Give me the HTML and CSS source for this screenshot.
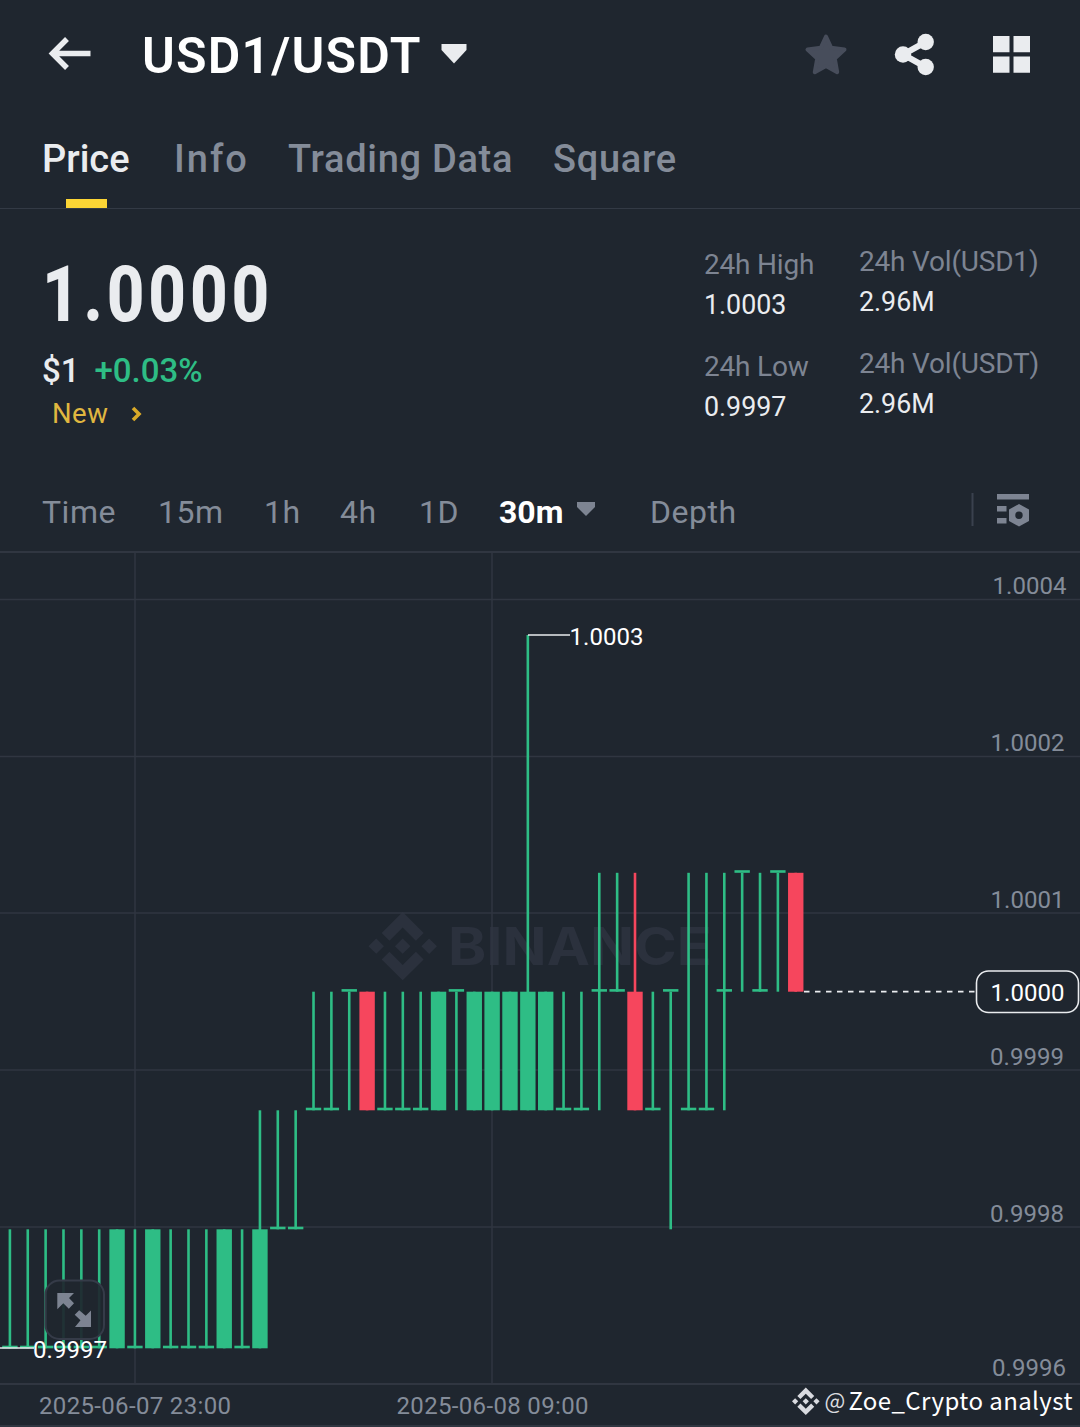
FILE: index.html
```html
<!DOCTYPE html>
<html lang="en">
<head>
  <meta charset="UTF-8">
  <title>USD1/USDT</title>
  <link rel="stylesheet" href="styles.css">
</head>
<body>

<header class="header">
  <svg class="header_back" width="44" height="36" viewBox="48 36 44 36">
    <path d="M67 39L52.500 53.500L67 68M52 53.500H90.500" fill="none" stroke="#eaecef" stroke-width="5.500"/>
  </svg>
  <h1 class="header_title">USD1/USDT</h1>
  <svg class="header_caret" width="26" height="20" viewBox="0 0 26 20">
    <path d="M.5 0h25v6L13 19.500.5 6z" fill="#eaecef"/>
  </svg>
  <div class="header_actions">
    <svg width="44" height="44" viewBox="804 31 44 44">
      <path d="M826 35.500l5.200 11.300 13.300 1.800-9.700 8.900 2.400 13.700L826 65l-11.200 6.200 2.400-13.700-9.700-8.900 13.300-1.800z" fill="#474d5b" stroke="#474d5b" stroke-width="4" stroke-linejoin="round"/>
    </svg>
    <svg width="44" height="44" viewBox="893 31 44 44">
      <path d="M925.700 41L903 53.500l22.700 12.500" fill="none" stroke="#eaecef" stroke-width="6"/>
      <g fill="#eaecef">
        <circle cx="903" cy="53.500" r="8.200"/>
        <circle cx="925.700" cy="41" r="8.200"/>
        <circle cx="925.700" cy="66" r="8.200"/>
      </g>
    </svg>
    <svg width="44" height="44" viewBox="989 31 44 44">
      <path d="M993 35h16.500v16.300H993zM1013.500 35h16.500v16.300h-16.500zM993 55.500h16.500v16.300H993zM1013.500 55.500h16.500v16.300h-16.500z" fill="#eaecef"/>
    </svg>
  </div>
</header>

<nav class="tabs">
  <a class="tabs_item is-active">Price</a>
  <a class="tabs_item tabs_item-info">Info</a>
  <a class="tabs_item tabs_item-data">Trading Data</a>
  <a class="tabs_item">Square</a>
</nav>

<section class="summary">
  <div class="summary_main">
    <div class="price">1.0000</div>
    <div class="change"><span class="change_fiat">$1</span><span class="change_rate">+0.03%</span></div>
    <div class="tag">New
      <svg width="12" height="16" viewBox="0 0 12 16"><path d="M2 2l6 6-6 6" fill="none" stroke="#d9a928" stroke-width="3.600"/></svg>
    </div>
  </div>
  <dl class="stats">
    <dt>24h High</dt><dd>1.0003</dd>
    <dt>24h Low</dt><dd>0.9997</dd>
  </dl>
  <dl class="stats stats-vol">
    <dt>24h Vol(USD1)</dt><dd>2.96M</dd>
    <dt>24h Vol(USDT)</dt><dd>2.96M</dd>
  </dl>
</section>

<nav class="intervals">
  <a>Time</a>
  <a>15m</a>
  <a>1h</a>
  <a>4h</a>
  <a>1D</a>
  <a class="is-active">30m <svg width="18" height="14" viewBox="0 0 18 14"><path d="M0 0h18v5L9 14 0 5z" fill="#7d8492"/></svg></a>
  <a>Depth</a>
  <svg class="intervals_settings" width="60" height="36" viewBox="971 492 60 36">
    <path d="M972.500 493v33" stroke="#3a414e" stroke-width="2"/>
    <path d="M997 494h32v5.500h-32zM997 506h9.500v5.500H997zM997 518h9.500v5.500H997z" fill="#7d8492"/>
    <path d="M1019 504l10 5.600v11.300l-10 5.600-10-5.600v-11.300zM1019 511.500a3.700 3.700 0 100 7.400 3.700 3.700 0 000-7.400z" fill="#7d8492" fill-rule="evenodd"/>
  </svg>
</nav>

<svg class="chart" width="1080" height="876" viewBox="0 551 1080 876">
  <defs>
    <path id="logo" d="M16.624 13.920l2.718 2.715-7.353 7.353-7.353-7.352 2.717-2.716 4.636 4.660 4.636-4.660zm4.637-4.637L24 12l-2.715 2.716L18.568 12l2.693-2.716zm-9.272.001l2.716 2.691-2.716 2.717L9.272 12l2.716-2.715zm-9.272-.001L5.409 12l-2.691 2.692L0 12l2.716-2.716zM11.989.012l7.353 7.329-2.718 2.715-4.636-4.636-4.635 4.660-2.717-2.715 7.353-7.353z"/>
  </defs>

  <g class="watermark">
    <use href="#logo" transform="translate(368.500 912) scale(2.850)"/>
    <text x="448" y="965" textLength="264" lengthAdjust="spacingAndGlyphs">BINANCE</text>
  </g>

  <path class="grid" d="M0 599.500H1080M0 756.500H1080M0 913H1080M0 1070H1080M0 1227H1080M135 552V1384M492 552V1384"/>
  <path class="grid grid-edge" d="M0 552H1080M0 1384H1080M0 1426H1080"/>

  <g id="candles"></g>

  <!-- high, low and last price markers -->
  <path class="marker" d="M528 635H570"/>
  <path class="last" d="M804 991.700H976"/>

  <g class="expand">
    <rect x="45.500" y="1280.500" width="58.500" height="58.500" rx="14"/>
    <path d="M57.300 1293H74l-5 5 5 5.300-5.200 5.400-5.500-5.400-6 6zM91 1327v-16.500l-5.300 5.200-6.500-5.400-4.500 4.500 5.800 5.500-5.500 6.700z"/>
  </g>
  <path class="marker" d="M0 1348H34"/>

  <g class="axis">
    <text x="992.500" y="594" textLength="74">1.0004</text>
    <text x="990.500" y="751" textLength="74">1.0002</text>
    <text x="990.500" y="908" textLength="74">1.0001</text>
    <text x="990" y="1065" textLength="74">0.9999</text>
    <text x="990" y="1222" textLength="74">0.9998</text>
    <text x="992" y="1376" textLength="74">0.9996</text>
    <text x="39" y="1414" textLength="192">2025-06-07 23:00</text>
    <text x="396.500" y="1414" textLength="192">2025-06-08 09:00</text>
  </g>

  <g class="axis axis-on">
    <rect x="976.500" y="971" width="102" height="41.500" rx="12"/>
    <text x="990.500" y="1001" textLength="74">1.0000</text>
    <text x="569.500" y="645" textLength="74">1.0003</text>
    <text x="33" y="1358" textLength="74">0.9997</text>
  </g>

  <g class="author">
    <use href="#logo" transform="translate(792 1387.500) scale(1.150)"/>
    <text x="824.500" y="1409" textLength="21">@</text>
    <text class="author_name" x="848.500" y="1410" textLength="224">Zoe_Crypto analyst</text>
  </g>
</svg>

<script src="chart.js"></script>
</body>
</html>
```
FILE: styles.css
```css
body {
  margin: 0;
  width: 1080px;
  height: 1427px;
  overflow: hidden;
  background-color: #1f262f;
  color: #eaecef;
  font-family: Roboto, "Liberation Sans", sans-serif;
}

.header {
  display: flex;
  align-items: center;
  height: 107px;
  padding: 0 47px 0 48px;
}
.header_title {
  margin: 5px 0 0 50px;
  width: 280px;
  color: #fff;
  font-size: 50px;
  font-weight: 600;
  letter-spacing: 1.2px;
  white-space: nowrap;
}
.header_caret {
  margin-left: 19px;
}
.header_actions {
  display: flex;
  margin-left: auto;
}
.header_actions svg {
  margin-left: 45px;
}
.header_actions svg:last-child {
  margin-left: 52px;
}

.tabs {
  display: grid;
  grid-template-columns: 132px 114px 265px 1fr;
  height: 101px;
  padding-left: 42px;
  border-bottom: 1px solid #333a45;
}
.tabs_item {
  position: relative;
  height: 101px;
  line-height: 104px;
  color: #848c99;
  font-size: 38px;
  font-weight: 500;
  letter-spacing: .7px;
  white-space: nowrap;
}
.tabs_item-info {
  letter-spacing: 2px;
}
.tabs .is-active {
  color: #eaecef;
  letter-spacing: 0;
}
.tabs .is-active::after {
  content: "";
  position: absolute;
  left: 24px;
  bottom: 0;
  width: 41px;
  height: 9px;
  background-color: #fcd535;
}

.summary {
  display: flex;
  height: 256px;
}
.summary_main {
  width: 662px;
  padding: 41px 0 0 42px;
}
.price {
  height: 90px;
  line-height: 90px;
  font-size: 77px;
  font-weight: 800;
  letter-spacing: 4.5px;
  transform: scaleX(.85);
  transform-origin: left;
}
.change {
  height: 61px;
  line-height: 61px;
  font-size: 33px;
  font-weight: 500;
}
.change_rate {
  margin-left: 15px;
  color: #2ebd85;
}
.tag {
  padding-left: 10px;
  line-height: 26px;
  color: #e0b740;
  font-size: 27.5px;
  letter-spacing: .5px;
}
.tag svg {
  margin-left: 15px;
  vertical-align: 1px;
}
.stats {
  width: 155px;
  margin: 36px 0 0;
  white-space: nowrap;
}
.stats-vol {
  width: 200px;
  margin-top: 33px;
}
.stats dt {
  height: 40px;
  line-height: 40px;
  color: #7d8492;
  font-size: 28px;
  letter-spacing: -.2px;
}
.stats dd {
  height: 40px;
  margin: 0 0 22px;
  line-height: 40px;
  font-size: 28.5px;
  transform: scaleX(.94);
  transform-origin: left;
}

.intervals {
  display: grid;
  grid-template-columns: 116px 106px 76px 79px 80px 151px 321px 60px;
  height: 86px;
  padding-left: 42px;
  line-height: 94px;
  color: #848c99;
  font-size: 32px;
  letter-spacing: .5px;
  white-space: nowrap;
}
.intervals .is-active {
  color: #fff;
  font-weight: 700;
  letter-spacing: 0;
}
.intervals .is-active svg {
  margin-left: 6px;
  vertical-align: 7px;
}
.intervals_settings {
  margin-top: 27px;
}

.chart {
  display: block;
}
.grid {
  fill: none;
  stroke: #303641;
  stroke-width: 1.5;
}
.grid-edge {
  stroke-width: 2;
}
.watermark {
  fill: #2b313d;
  font: 700 52px Inter, sans-serif;
}
.up {
  fill: #2ebd85;
}
.down {
  fill: #f6465d;
}
.marker {
  stroke: #eaecef;
  stroke-width: 1.6;
}
.last {
  stroke: #eaecef;
  stroke-width: 1.8;
  stroke-dasharray: 5.5 5.5;
}
.axis {
  fill: #848c99;
  font-size: 24px;
}
.axis-on {
  fill: #fff;
}
.axis-on rect {
  fill: #1f262f;
  stroke: #eaecef;
  stroke-width: 1.6;
}
.expand rect {
  fill: #1f262f;
  fill-opacity: .92;
  stroke: #353b48;
  stroke-width: 2;
}
.expand path {
  fill: #7d8492;
}
.author {
  fill: #d8dadf;
  font: 22px "Noto Sans CJK SC", sans-serif;
}
.author_name {
  fill: #fff;
  font-size: 24px;
}
```
FILE: chart.js
```js
(function(global) {
  'use strict';
  var doc = global.document;
  var NS = 'http://www.w3.org/2000/svg';

  // y of each price step
  var A = 872.8, B = 991.7, C = 1110.3, D = 1229.3, E = 1348.3;
  var PEAK = 635;

  // [wick top, wick bottom, open, close, isDown]
  var candles = [
    [D, E, E, E], [D, E, E, E], [D, E, E, E], [D, E, E, E], [D, E, E, E], [D, E, E, E],
    [D, E, E, D], [D, E, E, E], [D, E, E, D], [D, E, E, E], [D, E, E, E], [D, E, E, E],
    [D, E, E, D], [D, E, E, E], [C, E, E, D], [C, D, D, D], [C, D, D, D],
    [B, C, C, C], [B, C, C, C], [B, C, B, B], [B, C, B, C, 1], [B, C, C, C], [B, C, C, C],
    [B, C, C, C], [B, C, C, B], [B, C, B, B], [B, C, C, B], [B, C, C, B], [B, C, C, B],
    [PEAK, C, C, B], [B, C, C, B], [B, C, C, C], [B, C, C, C], [A, C, B, B], [A, B, B, B],
    [A, C, B, C, 1], [B, C, C, C], [B, D, B, B], [A, C, C, C], [A, C, C, C], [A, C, B, B],
    [A, B, A, A], [A, B, B, B], [A, B, A, A], [A, B, A, B, 1]
  ];

  var root = doc.getElementById('candles');

  function rect(x, y, w, h, cls) {
    var el = doc.createElementNS(NS, 'rect');
    el.setAttribute('x', x);
    el.setAttribute('y', y);
    el.setAttribute('width', w);
    el.setAttribute('height', h);
    el.setAttribute('class', cls);
    root.appendChild(el);
  }

  candles.forEach(function(c, i) {
    var x = 9.9 + i * 17.86;
    var cls = c[4] ? 'down' : 'up';
    var top = Math.min(c[2], c[3]);
    var h = Math.abs(c[2] - c[3]);

    rect(x - 1.3, c[0], 2.6, c[1] - c[0], cls);
    // a flat candle still gets a thin bar
    rect(x - 7.7, h ? top : top - 2.6, 15.4, h || 2.6, cls);
  });
}(this));
```
